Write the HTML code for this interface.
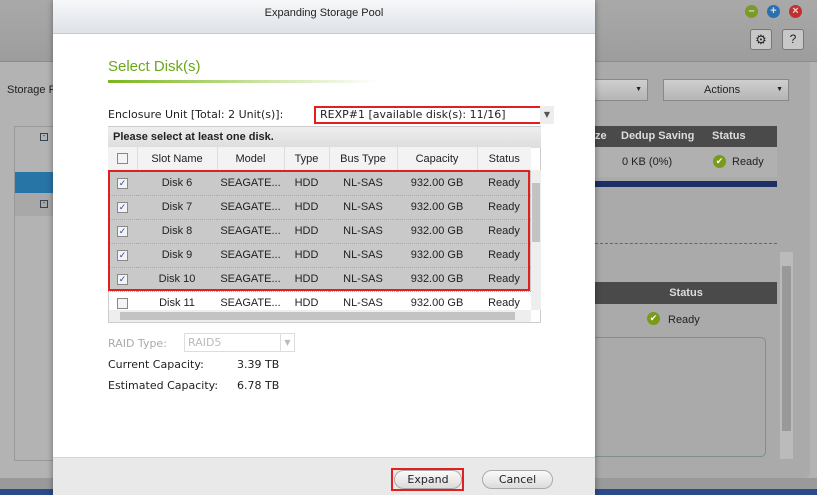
<!DOCTYPE html>
<html><head><style>
*{margin:0;padding:0;box-sizing:border-box}
body{width:817px;height:495px;overflow:hidden;position:relative;background:#b3b3b3;font-family:"Liberation Sans",sans-serif;font-size:11px;color:#222}
.a{position:absolute}
.dv{font-family:"DejaVu Sans",sans-serif;font-size:11px}
.hdr{left:0;top:0;width:817px;height:62px;background:linear-gradient(#a9a9a9,#9d9d9d);border-bottom:1px solid #8c8c8c}
.circ{width:13px;height:13px;border-radius:50%;color:#ddd;font-size:11px;line-height:13px;text-align:center;font-weight:bold}
.dlg{left:53px;top:0;width:542px;height:495px;background:#fff;box-shadow:0 0 6px rgba(0,0,0,.4)}
.tb{left:0;top:0;width:542px;height:34px;background:linear-gradient(#f7f8fa,#dde2e8);border-bottom:1px solid #c6cbd2;text-align:center;line-height:26px;font-size:11px;color:#222}
table{border-collapse:collapse;font-size:11px}
td{height:24px;text-align:center;border-bottom:1px dotted #aaa}
.cb{display:inline-block;width:11px;height:11px;border:1px solid #888;background:#f4f4f4;font-size:9px;line-height:9px;color:#2a4bb0;vertical-align:middle}
.btn{height:19px;border:1px solid #aaa;border-radius:10px;background:linear-gradient(#fafafa,#dcdcdc);text-align:center;line-height:17px;font-size:11px}
</style></head><body>
<div class="a hdr"></div>
<div class="a circ" style="left:745px;top:5px;background:#7a9a2a">–</div>
<div class="a circ" style="left:767px;top:5px;background:#2a70b0">+</div>
<div class="a circ" style="left:789px;top:5px;background:#c03030">×</div>
<div class="a" style="left:750px;top:29px;width:22px;height:21px;border:1px solid #777;border-radius:3px;background:#c8c8c8;text-align:center;line-height:19px;font-size:13px">⚙</div>
<div class="a" style="left:782px;top:29px;width:22px;height:21px;border:1px solid #777;border-radius:3px;background:#c8c8c8;text-align:center;line-height:19px;font-size:12px">?</div>
<div class="a" style="left:7px;top:84px;font-size:11px">Storage P</div>
<div class="a" style="left:14px;top:126px;width:60px;height:335px;border:1px solid #999"></div>
<div class="a" style="left:15px;top:172px;width:45px;height:21px;background:#2774a6"></div>
<div class="a" style="left:15px;top:193px;width:45px;height:23px;background:#a8a8a8"></div>
<div class="a" style="left:40px;top:133px;width:8px;height:8px;border:1px solid #345;font-size:7px;line-height:5px;text-align:center">-</div>
<div class="a" style="left:40px;top:200px;width:8px;height:8px;border:1px solid #345;font-size:7px;line-height:5px;text-align:center">-</div>
<div class="a" style="left:0;top:478px;width:817px;height:17px;background:#9a9a9a"></div>
<div class="a" style="left:0;top:489px;width:817px;height:6px;background:#2a4a8a"></div>
<div class="a" style="left:595px;top:62px;width:215px;height:416px;background:#aaaaaa;border-radius:0 0 6px 0"></div>
<div class="a" style="left:663px;top:79px;width:126px;height:22px;border:1px solid #888;background:linear-gradient(#cfcfcf,#b5b5b5);line-height:20px;padding-left:40px">Actions<span style="position:absolute;right:5px;font-size:7px">▼</span></div>
<div class="a" style="left:595px;top:79px;width:53px;height:22px;border:1px solid #888;border-left:none;background:linear-gradient(#cfcfcf,#b5b5b5)"><span style="position:absolute;right:5px;top:6px;font-size:7px">▼</span></div>
<div class="a" style="left:595px;top:126px;width:182px;height:21px;background:#4a4a4a;color:#ddd;font-weight:bold;line-height:21px"><span style="position:absolute;left:26px">Dedup Saving</span><span style="position:absolute;left:117px">Status</span><span style="position:absolute;left:0">ze</span></div>
<div class="a" style="left:595px;top:147px;width:182px;height:30px;background:#b0b0b0;line-height:30px"><span style="position:absolute;left:27px">0 KB (0%)</span><span style="position:absolute;left:118px;top:8px;width:13px;height:13px;border-radius:50%;background:#7a9a1a;color:#fff;font-size:9px;line-height:13px;text-align:center">✔</span><span style="position:absolute;left:137px">Ready</span></div>
<div class="a" style="left:595px;top:181px;width:182px;height:6px;background:#1e2f66"></div>
<div class="a" style="left:595px;top:243px;width:182px;border-top:1px dashed #666"></div>
<div class="a" style="left:780px;top:252px;width:13px;height:207px;background:#bbb"></div>
<div class="a" style="left:782px;top:266px;width:9px;height:165px;background:#999"></div>
<div class="a" style="left:595px;top:282px;width:182px;height:22px;background:#4a4a4a;color:#ddd;font-weight:bold;line-height:22px;text-align:center">Status</div>
<div class="a" style="left:647px;top:312px;width:13px;height:13px;border-radius:50%;background:#7a9a1a;color:#fff;font-size:9px;line-height:13px;text-align:center">✔</div>
<div class="a" style="left:668px;top:314px">Ready</div>
<div class="a" style="left:590px;top:337px;width:176px;height:120px;border:1px solid #7f8f8f;border-radius:5px"></div>

<div class="a dlg">
<div class="a tb">Expanding Storage Pool</div>
<div class="a" style="left:55px;top:58px;font-size:15px;color:#6aa81a">Select Disk(s)</div>
<div class="a" style="left:55px;top:80px;width:270px;height:3px;background:linear-gradient(90deg,#7ab51e,#cfe6a8 60%,#fff)"></div>
<div class="a dv" style="left:55px;top:108px">Enclosure Unit [Total: 2 Unit(s)]:</div>
<div class="a dv" style="left:261px;top:106px;width:228px;height:18px;border:2px solid #e02020;line-height:14px;padding-left:4px;white-space:nowrap">REXP#1 [available disk(s): 11/16]<span style="position:absolute;right:-14px;top:-2px;width:14px;height:18px;background:#eee;font-size:8px;text-align:center;line-height:18px;color:#555">▼</span></div>
<div class="a" style="left:55px;top:126px;width:433px;height:197px;border:1px solid #ccc;background:#fff"></div>
<div class="a" style="left:55px;top:127px;width:433px;height:21px;background:linear-gradient(#eee,#ddd);font-weight:bold;line-height:21px;padding-left:5px">Please select at least one disk.</div>
<div class="a" style="left:55px;top:147px;width:423px">
<table style="width:423px">
<tr style="background:#f3f3f3"><td style="width:29px;height:23px;border-right:1px solid #ddd"><span class="cb"></span></td><td style="width:80px;border-right:1px solid #ddd">Slot Name</td><td style="width:67px;border-right:1px solid #ddd">Model</td><td style="width:45px;border-right:1px solid #ddd">Type</td><td style="width:68px;border-right:1px solid #ddd">Bus Type</td><td style="width:80px;border-right:1px solid #ddd">Capacity</td><td>Status</td></tr>
<tr style="background:#c9c9c9"><td><span class="cb">✓</span></td><td>Disk 6</td><td>SEAGATE...</td><td>HDD</td><td>NL-SAS</td><td>932.00 GB</td><td>Ready</td></tr>
<tr style="background:#c9c9c9"><td><span class="cb">✓</span></td><td>Disk 7</td><td>SEAGATE...</td><td>HDD</td><td>NL-SAS</td><td>932.00 GB</td><td>Ready</td></tr>
<tr style="background:#c9c9c9"><td><span class="cb">✓</span></td><td>Disk 8</td><td>SEAGATE...</td><td>HDD</td><td>NL-SAS</td><td>932.00 GB</td><td>Ready</td></tr>
<tr style="background:#c9c9c9"><td><span class="cb">✓</span></td><td>Disk 9</td><td>SEAGATE...</td><td>HDD</td><td>NL-SAS</td><td>932.00 GB</td><td>Ready</td></tr>
<tr style="background:#c9c9c9"><td><span class="cb">✓</span></td><td>Disk 10</td><td>SEAGATE...</td><td>HDD</td><td>NL-SAS</td><td>932.00 GB</td><td>Ready</td></tr>
<tr><td style="border:none"><span class="cb"></span></td><td style="border:none">Disk 11</td><td style="border:none">SEAGATE...</td><td style="border:none">HDD</td><td style="border:none">NL-SAS</td><td style="border:none">932.00 GB</td><td style="border:none">Ready</td></tr>
</table></div>
<div class="a" style="left:55px;top:170px;width:422px;height:121px;border:2px solid #e02020"></div>
<div class="a" style="left:478px;top:170px;width:10px;height:140px;background:#eee"></div>
<div class="a" style="left:479px;top:183px;width:8px;height:59px;background:#c3c3c3"></div>
<div class="a" style="left:56px;top:310px;width:422px;height:12px;background:#eee"></div>
<div class="a" style="left:67px;top:312px;width:395px;height:8px;background:#c3c3c3"></div>
<div class="a dv" style="left:55px;top:337px;color:#aaa">RAID Type:</div>
<div class="a dv" style="left:131px;top:333px;width:111px;height:19px;border:1px solid #ddd;color:#bbb;line-height:17px;padding-left:3px">RAID5<span style="position:absolute;right:0;top:0;width:14px;height:17px;border-left:1px solid #ddd;font-size:8px;text-align:center">▼</span></div>
<div class="a dv" style="left:55px;top:358px">Current Capacity:</div>
<div class="a dv" style="left:184px;top:358px">3.39 TB</div>
<div class="a dv" style="left:55px;top:379px">Estimated Capacity:</div>
<div class="a dv" style="left:184px;top:379px">6.78 TB</div>
<div class="a" style="left:0;top:457px;width:542px;height:38px;background:#e9e9e9;border-top:1px solid #d4d4d4"></div>
<div class="a" style="left:338px;top:468px;width:73px;height:23px;border:2px solid #e02020"></div>
<div class="a btn dv" style="left:341px;top:470px;width:68px">Expand</div>
<div class="a btn dv" style="left:429px;top:470px;width:71px">Cancel</div>
</div>
</body></html>
